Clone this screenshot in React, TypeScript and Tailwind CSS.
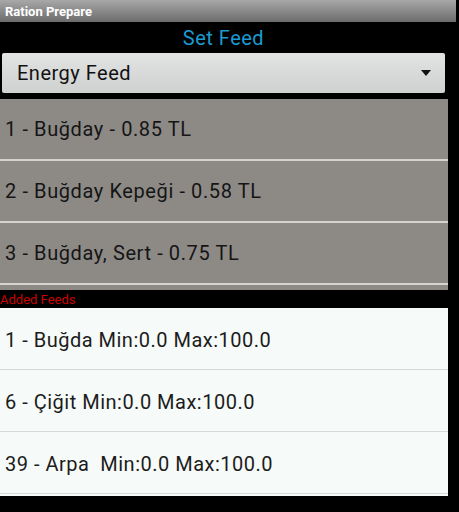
import React from 'react';

const feeds = ['1 - Buğday - 0.85 TL', '2 - Buğday Kepeği - 0.58 TL', '3 - Buğday, Sert - 0.75 TL'];
const added = ['1 - Buğda Min:0.0 Max:100.0', '6 - Çiğit Min:0.0 Max:100.0', '39 - Arpa  Min:0.0 Max:100.0'];

export default function App() {
  return (
    <div className="w-[459px] h-[512px] bg-black overflow-hidden font-['Roboto','Liberation_Sans',sans-serif]">
      {/* title bar */}
      <div className="w-[456px] h-[22px] bg-gradient-to-b from-[#a8a8a8] to-[#6c6c6c] flex items-center pl-[5px]">
        <span className="text-white font-bold text-[13px] leading-none">Ration Prepare</span>
      </div>

      <div className="w-[447px] h-[31px] flex items-center justify-center">
        <span className="text-[#1b9bd1] text-[20px] leading-none tracking-[0.5px]">Set Feed</span>
      </div>

      {/* spinner */}
      <div className="ml-[2px] w-[443px] h-[40px] rounded-[2px] bg-gradient-to-b from-[#e2e4e3] to-[#cfd1d0] flex items-center justify-between pl-[15px] pr-[14px]">
        <span className="text-[#111] text-[20px] leading-none tracking-[0.5px]">Energy Feed</span>
        <svg width="10" height="6" viewBox="0 0 10 6">
          <path d="M0 0 L10 0 L5 6 Z" fill="#111" />
        </svg>
      </div>

      {/* feed list */}
      <div className="mt-[6px] w-[448px] h-[191px] bg-[#8d8a86] flex flex-col">
        {feeds.map(f => (
          <div key={f} className="h-[62px] flex items-center pl-[5px] border-b-2 border-[#d4d3d0] shrink-0">
            <span className="text-[#151515] text-[20px] leading-none tracking-[0.6px]">{f}</span>
          </div>
        ))}
      </div>

      <div className="h-[18px] flex items-center">
        <span className="text-[#cc0000] text-[13px] leading-none">Added Feeds</span>
      </div>

      {/* added list */}
      <div className="w-[448px] h-[188px] bg-[#f6faf8] flex flex-col">
        {added.map(a => (
          <div key={a} className="h-[62px] flex items-center pl-[5px] pt-[2px] border-b border-[#d6d9d7] shrink-0 whitespace-pre">
            <span className="text-[#1c1c1c] text-[20px] leading-none tracking-[0.5px]">{a}</span>
          </div>
        ))}
      </div>
    </div>
  );
}
